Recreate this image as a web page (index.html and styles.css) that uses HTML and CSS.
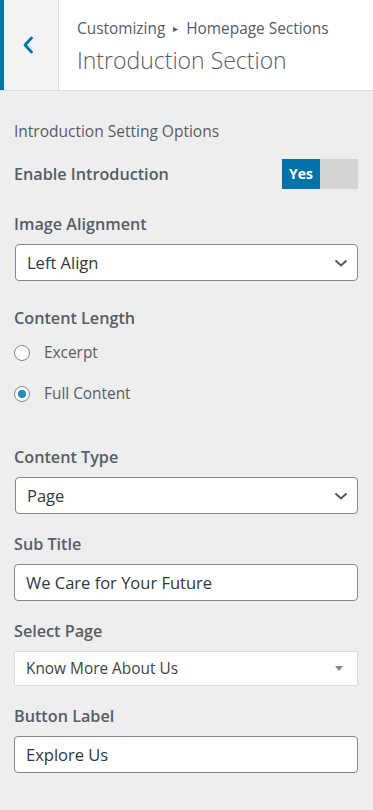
FILE: index.html
```html
<!DOCTYPE html>
<html lang="en">
<head>
    <meta charset="UTF-8">
    <meta name="viewport" content="width=device-width, initial-scale=1.0">
    <title>Customizing - Introduction Section</title>
    <link rel="stylesheet" href="styles.css">
</head>
<body>
    <div class="panel-header">
        <button class="back-button" aria-label="Back">
            <svg width="12" height="18" viewBox="0 0 12 18">
                <polyline points="9.5,2 3,9 9.5,16" fill="none" stroke="#0073aa" stroke-width="2.8" stroke-linecap="round" stroke-linejoin="round"/>
            </svg>
        </button>
        <div class="panel-title">
            <div class="breadcrumb">Customizing <span class="crumb-arrow">&#9656;</span> Homepage Sections</div>
            <h1>Introduction Section</h1>
        </div>
    </div>

    <div class="panel-content">
        <p class="section-desc">Introduction Setting Options</p>

        <!-- Enable toggle -->
        <div class="control toggle-row">
            <span class="control-label">Enable Introduction</span>
            <div class="toggle">
                <span class="toggle-on">Yes</span>
                <span class="toggle-off"></span>
            </div>
        </div>

        <div class="control">
            <label class="control-label">Image Alignment</label>
            <div class="select-box">
                <span>Left Align</span>
                <svg class="chevron" width="14" height="8" viewBox="0 0 14 8">
                    <polyline points="1.5,1.5 7,6.5 12.5,1.5" fill="none" stroke="#50575e" stroke-width="2"/>
                </svg>
            </div>
        </div>

        <div class="control radio-control">
            <span class="control-label">Content Length</span>
            <div class="radio-row">
                <span class="radio"></span>
                <span>Excerpt</span>
            </div>
            <div class="radio-row">
                <span class="radio checked"></span>
                <span>Full Content</span>
            </div>
        </div>

        <div class="control">
            <label class="control-label">Content Type</label>
            <div class="select-box">
                <span>Page</span>
                <svg class="chevron" width="14" height="8" viewBox="0 0 14 8">
                    <polyline points="1.5,1.5 7,6.5 12.5,1.5" fill="none" stroke="#50575e" stroke-width="2"/>
                </svg>
            </div>
        </div>

        <div class="control">
            <label class="control-label">Sub Title</label>
            <div class="text-input">We Care for Your Future</div>
        </div>

        <div class="control">
            <label class="control-label">Select Page</label>
            <div class="select2-box">
                <span>Know More About Us</span>
                <span class="select2-arrow"></span>
            </div>
        </div>

        <div class="control">
            <label class="control-label">Button Label</label>
            <div class="text-input">Explore Us</div>
        </div>
    </div>
</body>
</html>
```

FILE: styles.css
```css
* {
    box-sizing: border-box;
    margin: 0;
    padding: 0;
}

body {
    font-family: "Open Sans", "Noto Sans", sans-serif;
    background-color: #eeeeee;
    color: #555d66;
    min-height: 100vh;
}

.panel-header {
    display: flex;
    height: 91px;
    background-color: #ffffff;
    border-bottom: 1px solid #dddddd;
}

.back-button {
    width: 59px;
    flex-shrink: 0;
    background-color: #f3f3f5;
    border: none;
    border-left: 4px solid #0073aa;
    border-right: 1px solid #dddddd;
    display: flex;
    align-items: center;
    justify-content: center;
    padding-right: 6px;
    padding-bottom: 1px;
}

.panel-title {
    padding: 18px 0 0 18px;
}

.breadcrumb {
    font-size: 15.4px;
    line-height: 20px;
    color: #555d66;
    white-space: nowrap;
}

.crumb-arrow {
    font-size: 10px;
    vertical-align: 2px;
    margin: 0 4px;
}

.panel-title h1 {
    font-size: 23px;
    font-weight: 300;
    line-height: 28px;
    margin-top: 7px;
    color: #555d66;
    white-space: nowrap;
}

.panel-content {
    padding: 29px 15px 30px 14px;
}

.section-desc {
    font-size: 15.5px;
    line-height: 22px;
    margin-bottom: 17px;
}

.control {
    margin-bottom: 19px;
}

.control-label {
    display: block;
    font-size: 16.2px;
    font-weight: 600;
    line-height: 22px;
    margin-bottom: 9px;
}

.toggle-row {
    display: flex;
    justify-content: space-between;
    align-items: center;
    height: 30px;
    margin-bottom: 24px;
}

.toggle-row .control-label {
    margin-bottom: 0;
}

.toggle {
    display: flex;
    width: 76px;
    height: 30px;
}

.toggle-on {
    width: 38px;
    background-color: #0073aa;
    color: #ffffff;
    font-size: 14px;
    font-weight: 700;
    line-height: 30px;
    text-align: center;
}

.toggle-off {
    width: 38px;
    background-color: #d4d4d4;
}

.select-box,
.text-input {
    display: flex;
    align-items: center;
    justify-content: space-between;
    height: 37px;
    padding: 0 9px 0 11px;
    margin-left: 1px;
    background-color: #ffffff;
    border: 1px solid #7e8993;
    border-radius: 4px;
    font-size: 16.5px;
    color: #32373c;
}

.text-input {
    margin-left: 0;
}

.chevron {
    display: block;
}

.radio-control {
    margin-top: 26px;
    margin-bottom: 32px;
}

.radio-control .control-label {
    margin-bottom: 3px;
}

.radio-row {
    display: flex;
    align-items: center;
    gap: 14px;
    height: 41px;
    font-size: 15.4px;
}

.radio {
    width: 16px;
    height: 16px;
    border: 1px solid #7e8993;
    border-radius: 50%;
    background-color: #ffffff;
    display: flex;
    align-items: center;
    justify-content: center;
}

.radio.checked::after {
    content: "";
    width: 8px;
    height: 8px;
    border-radius: 50%;
    background-color: #1e8cbe;
}

.select2-box {
    display: flex;
    align-items: center;
    justify-content: space-between;
    height: 35px;
    padding: 0 14px 0 11px;
    background-color: #ffffff;
    border: 1px solid #dddddd;
    font-size: 15.4px;
    color: #444444;
}

.select2-arrow {
    width: 0;
    height: 0;
    border-left: 4px solid transparent;
    border-right: 4px solid transparent;
    border-top: 5px solid #888888;
}
```
